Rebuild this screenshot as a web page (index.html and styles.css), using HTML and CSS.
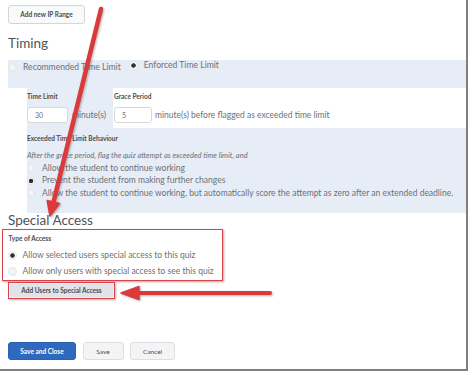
FILE: index.html
```html
<!DOCTYPE html>
<html lang="en">
<head>
<meta charset="utf-8">
<title>Quiz restrictions</title>
<link rel="stylesheet" href="styles.css">
</head>
<body>
<div class="frame">
  <div class="content">
    <button class="btn btn-ip">Add new IP Range</button>
    <h2 class="heading timing">Timing</h2>
    <div class="band band-top">
      <label class="radio radio-low"><span class="circle"></span>Recommended Time Limit</label>
      <label class="radio"><span class="circle checked"></span>Enforced Time Limit</label>
    </div>
    <div class="sub">
      <div class="limits">
        <div class="field field-blue">
          <div class="lbl">Time Limit</div>
          <div class="row"><span class="input">30</span><span class="unit">minute(s)</span></div>
        </div>
        <div class="field field-grace">
          <div class="lbl">Grace Period</div>
          <div class="row"><span class="input input-small">5</span><span class="unit">minute(s) before flagged as exceeded time limit</span></div>
        </div>
      </div>
      <div class="exceeded">
        <div class="lbl">Exceeded Time Limit Behaviour</div>
        <div class="hint">After the grace period, flag the quiz attempt as exceeded time limit, and</div>
        <div class="options">
          <label class="radio opt"><span class="circle small"></span>Allow the student to continue working</label>
          <label class="radio opt"><span class="circle small checked"></span>Prevent the student from making further changes</label>
          <label class="radio opt"><span class="circle small"></span>Allow the student to continue working, but automatically score the attempt as zero after an extended deadline.</label>
        </div>
      </div>
    </div>
    <h2 class="heading special">Special Access</h2>
    <div class="hl-box">
      <div class="lbl lbl-type">Type of Access</div>
      <div class="access-options">
        <label class="radio access"><span class="circle checked"></span>Allow selected users special access to this quiz</label>
        <label class="radio access"><span class="circle"></span>Allow only users with special access to see this quiz</label>
      </div>
    </div>
    <button class="btn hl-btn">Add Users to Special Access</button>
    <div class="actions">
      <button class="btn btn-primary">Save and Close</button>
      <button class="btn btn-secondary btn-save">Save</button>
      <button class="btn btn-secondary btn-cancel">Cancel</button>
    </div>
  </div>
  <svg class="arrows" width="474" height="375" viewBox="0 0 474 375" aria-hidden="true">
    <g class="arrow">
      <line x1="101" y1="9" x2="53" y2="204" stroke="#dc3a3a" stroke-width="4.5" stroke-linecap="round"/>
      <polygon points="50,216 59.5,203.5 47.2,200.5" fill="#dc3a3a" stroke="#dc3a3a" stroke-width="1.5" stroke-linejoin="round"/>
    </g>
    <g class="arrow">
      <line x1="270" y1="293" x2="136" y2="293" stroke="#dc3a3a" stroke-width="4" stroke-linecap="round"/>
      <polygon points="121,293 139,286.5 139,299.5" fill="#dc3a3a" stroke="#dc3a3a" stroke-width="1.5" stroke-linejoin="round"/>
    </g>
  </svg>
</div>
</body>
</html>
```
FILE: styles.css
```css
* { box-sizing: border-box; }

body {
  margin: 0;
  background: #ffffff;
  font-family: Lato, "Open Sans", "Liberation Sans", sans-serif;
  color: #6d7174;
}

.frame {
  position: relative;
  width: 468px;
  height: 371px;
  border-right: 2px solid #7f7f7f;
  border-bottom: 2px solid #7f7f7f;
  overflow: hidden;
}

.content {
  display: flex;
  flex-direction: column;
  align-items: flex-start;
  padding: 5px 0 0 8px;
}

.btn {
  font-family: Lato, "Open Sans", "Liberation Sans", sans-serif;
  margin: 0;
  padding: 0;
  cursor: pointer;
}

.btn-ip {
  width: 77px;
  height: 19px;
  border: 1px solid #d3d6d9;
  border-radius: 3px;
  background: #f9fafb;
  font-size: 6.5px;
  font-weight: 700;
  color: #494c4e;
}

.heading {
  margin: 0;
  font-size: 13.5px;
  line-height: 14px;
  font-weight: 400;
  color: #4f5356;
}

.timing { margin-top: 12px; }

.band-top {
  align-self: stretch;
  height: 28px;
  margin-top: 10px;
  background: #e6edf7;
  display: flex;
  align-items: flex-start;
  gap: 8px;
  padding-top: 0;
}

.band-top .radio { font-size: 8.6px; }

.radio {
  display: flex;
  align-items: center;
  gap: 6px;
  font-size: 9px;
  line-height: 11px;
  color: #6d7174;
  white-space: nowrap;
}

.radio-low { margin-top: 2px; }

.circle {
  flex: none;
  width: 9px;
  height: 9px;
  border-radius: 50%;
  border: 1px solid #e1e4e7;
  background: #f3f4f5;
}

.circle.checked {
  background: radial-gradient(circle, #2f3133 0 1.9px, #ffffff 2.6px);
}

.circle.small {
  width: 8px;
  height: 8px;
}

.sub {
  align-self: stretch;
  margin-left: 19px;
}

.limits {
  display: flex;
  height: 40px;
}

.field {
  padding-top: 5px;
}

.field-blue {
  width: 86px;
  background: #e6edf7;
}

.field-grace {
  margin-left: 1px;
}

.lbl {
  font-size: 6.5px;
  line-height: 8px;
  font-weight: 700;
  color: #494c4e;
}

.row {
  display: flex;
  align-items: center;
  gap: 4px;
  margin-top: 6px;
}

.field-grace .row { gap: 3px; }

.input {
  display: flex;
  align-items: center;
  width: 41px;
  height: 16px;
  padding-left: 7px;
  border: 1px solid #d6d9dc;
  border-radius: 3px;
  background: #ffffff;
  font-size: 7px;
  color: #6d7174;
}

.input-small { width: 38px; }

.unit {
  font-size: 8.5px;
  color: #6d7174;
  white-space: nowrap;
}

.exceeded {
  background: #e6edf7;
  padding: 7px 0 13px 0;
}

.hint {
  margin-top: 7.5px;
  font-size: 7.5px;
  line-height: 9px;
  font-style: italic;
  color: #6d7174;
}

.options {
  margin-top: 2.5px;
  display: flex;
  flex-direction: column;
}

.opt {
  height: 12.5px;
  gap: 7px;
  font-size: 8.5px;
}

.special { margin-top: 0; }

.hl-box {
  margin-top: 2px;
  margin-left: -6px;
  width: 221px;
  border: 1.5px solid #d9444b;
  padding: 5.5px 0 0 4.5px;
  box-shadow: 1px 1px 2px rgba(0, 0, 0, 0.35);
}

.lbl-type { margin-left: 1px; }

.access-options {
  margin-top: 3.75px;
  display: flex;
  flex-direction: column;
}

.access {
  height: 16.5px;
  font-size: 8.5px;
}

.hl-btn {
  margin-top: 1.5px;
  width: 107px;
  height: 17px;
  border: 1.5px solid #d9444b;
  background: #e2e3e9;
  font-size: 6.5px;
  font-weight: 700;
  color: #494c4e;
  box-shadow: 1px 1px 2px rgba(0, 0, 0, 0.3), inset 0 0 0 1px #eeeff3;
}

.actions {
  margin-top: 42.75px;
  display: flex;
  gap: 6.5px;
}

.btn-primary {
  width: 68px;
  height: 18px;
  border: 1px solid #2a62b3;
  border-radius: 3px;
  background: #2f69bd;
  color: #ffffff;
  font-size: 6.5px;
  font-weight: 700;
}

.btn-secondary {
  height: 18px;
  border: 1px solid #dcdee1;
  border-radius: 3px;
  background: #f3f4f6;
  color: #494c4e;
  font-size: 6.5px;
  font-weight: 400;
}

.btn-save { width: 41px; }
.btn-cancel { width: 45px; }

.arrows {
  position: absolute;
  left: 0;
  top: 0;
  pointer-events: none;
}

.arrow {
  filter: drop-shadow(1px 1px 1px rgba(0, 0, 0, 0.3));
}
```
